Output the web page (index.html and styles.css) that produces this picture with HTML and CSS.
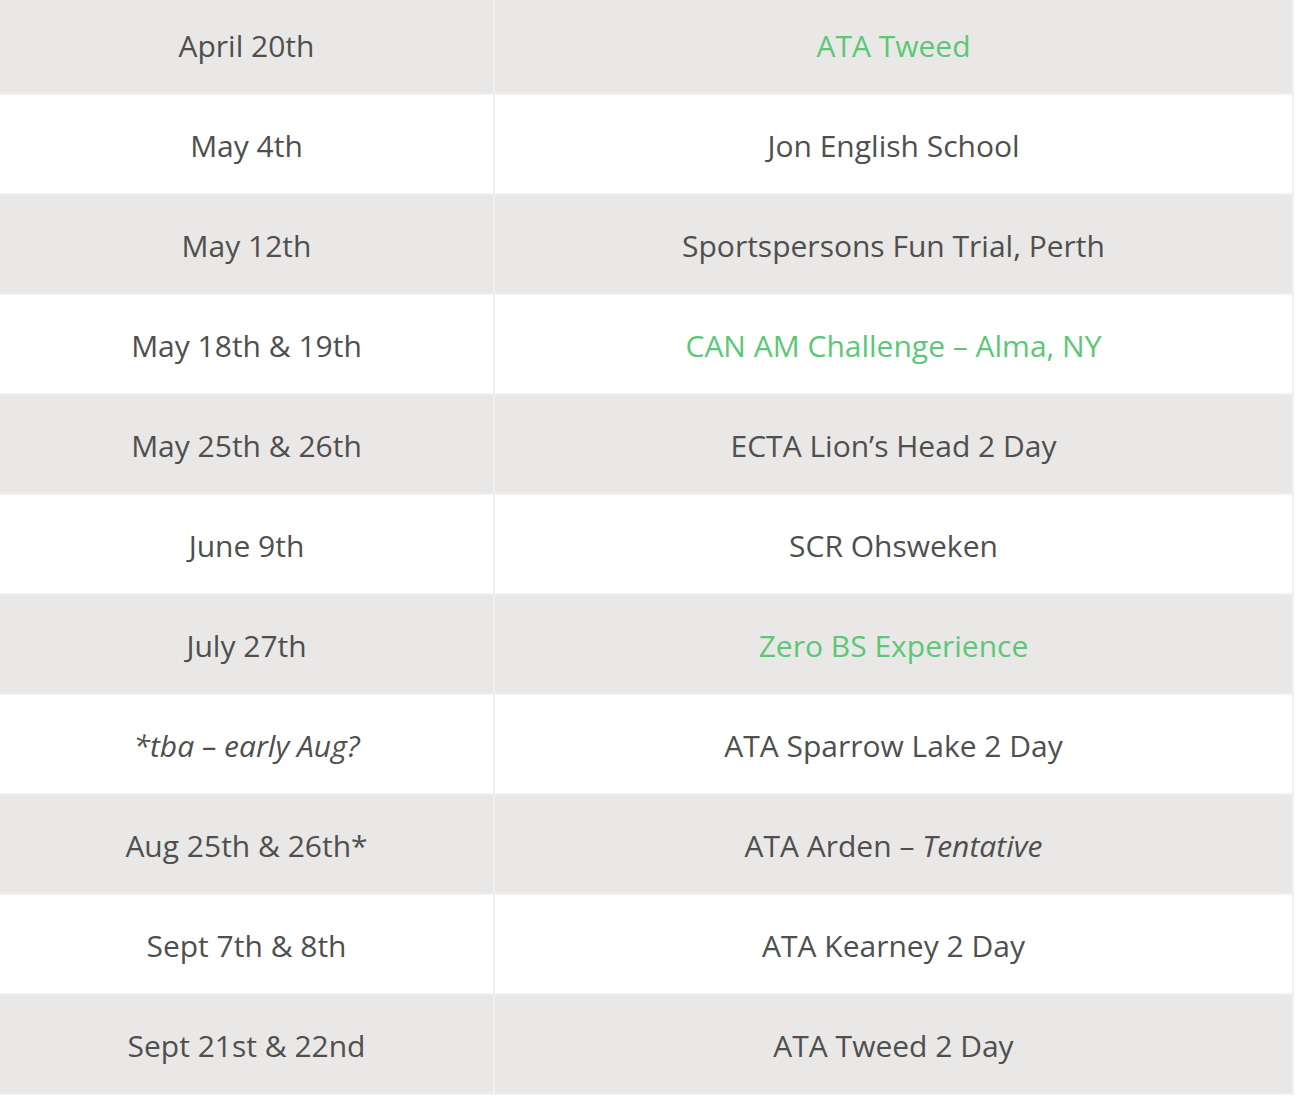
FILE: index.html
```html
<!DOCTYPE html>
<html lang="en">
<head>
<meta charset="utf-8">
<title>Schedule</title>
<link rel="stylesheet" href="styles.css">
</head>
<body>
<div class="schedule">
  <div class="row alt"><div class="cell date"><span>April 20th</span></div><div class="cell event link"><span>ATA Tweed</span></div></div>
  <div class="row"><div class="cell date"><span>May 4th</span></div><div class="cell event"><span>Jon English School</span></div></div>
  <div class="row alt"><div class="cell date"><span>May 12th</span></div><div class="cell event"><span>Sportspersons Fun Trial, Perth</span></div></div>
  <div class="row"><div class="cell date"><span>May 18th &amp; 19th</span></div><div class="cell event link"><span>CAN AM Challenge – Alma, NY</span></div></div>
  <div class="row alt"><div class="cell date"><span>May 25th &amp; 26th</span></div><div class="cell event"><span>ECTA Lion’s Head 2 Day</span></div></div>
  <div class="row"><div class="cell date"><span>June 9th</span></div><div class="cell event"><span>SCR Ohsweken</span></div></div>
  <div class="row alt"><div class="cell date"><span>July 27th</span></div><div class="cell event link"><span>Zero BS Experience</span></div></div>
  <div class="row"><div class="cell date"><span><em>*tba – early Aug?</em></span></div><div class="cell event"><span>ATA Sparrow Lake 2 Day</span></div></div>
  <div class="row alt"><div class="cell date"><span>Aug 25th &amp; 26th*</span></div><div class="cell event"><span>ATA Arden – <em>Tentative</em></span></div></div>
  <div class="row"><div class="cell date"><span>Sept 7th &amp; 8th</span></div><div class="cell event"><span>ATA Kearney 2 Day</span></div></div>
  <div class="row alt"><div class="cell date"><span>Sept 21st &amp; 22nd</span></div><div class="cell event"><span>ATA Tweed 2 Day</span></div></div>
</div>
</body>
</html>
```

FILE: styles.css
```css
html, body {
  margin: 0;
  padding: 0;
  background: #ffffff;
}

body {
  font-family: "Open Sans", "Liberation Sans", sans-serif;
  font-size: 30px;
  color: #4f4f4f;
  overflow: hidden;
}

.schedule {
  width: 1294px;
  margin-top: -5px;
}

.row {
  display: grid;
  grid-template-columns: 495px 799px;
  height: 100px;
  box-sizing: border-box;
  border-bottom: 2px solid #f0f0f0;
  background: #ffffff;
}

.row.alt {
  background: #e9e8e6;
}

.cell {
  display: flex;
  align-items: center;
  justify-content: center;
  box-sizing: border-box;
  padding-top: 2px;
  border-right: 2px solid #f0f0f0;
  white-space: nowrap;
}

.cell em {
  font-style: italic;
}

.link {
  color: #5cc777;
}
```
